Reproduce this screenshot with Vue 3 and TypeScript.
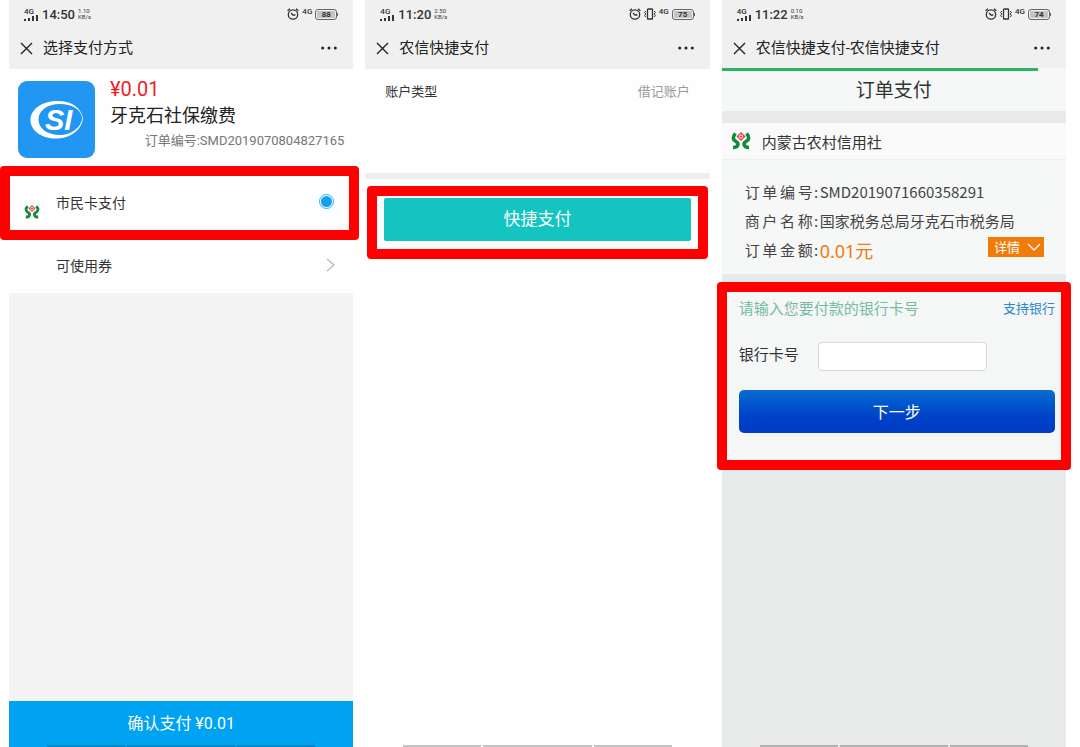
<script setup lang="ts">
import { ref } from 'vue'

interface Screen {
  id: string
  time: string
  speed: string
  battery: string
  vibrate: boolean
  title: string
}

const screens: Screen[] = [
  { id: 'method', time: '14:50', speed: '1.10', battery: '88', vibrate: false, title: '选择支付方式' },
  { id: 'quick', time: '11:20', speed: '2.50', battery: '75', vibrate: true, title: '农信快捷支付' },
  { id: 'order', time: '11:22', speed: '0.10', battery: '74', vibrate: true, title: '农信快捷支付-农信快捷支付' },
]

const orderRows = [
  { label: '订单编号', value: 'SMD2019071660358291' },
  { label: '商户名称', value: '国家税务总局牙克石市税务局' },
]

const method = ref('citizen')
const cardNumber = ref('')
</script>

<template>
  <main class="board">
    <section v-for="s in screens" :key="s.id" class="phone" :class="s.id">
      <header class="top">
        <div class="status">
          <span class="network">
            <span class="net">4G</span>
            <svg class="bars" viewBox="0 0 14 6" aria-hidden="true">
              <path d="M0 4h2v2H0zM4 3h2v3H4zM8 1h2v5H8zM12 0h2v6h-2z" fill="#333" />
            </svg>
          </span>
          <span class="time">{{ s.time }}</span>
          <span class="speed"><span>{{ s.speed }}</span><span>KB/s</span></span>
          <span class="spacer"></span>
          <svg class="alarm" viewBox="0 0 12 12" fill="none" stroke="#333" aria-hidden="true">
            <circle cx="6" cy="6.5" r="4.7" stroke-width="1.3" />
            <path d="M4 5l2 2h2.400M.6 2.800L3 .8M11.400 2.800L9 .8" stroke-width="1.300" />
          </svg>
          <svg v-if="s.vibrate" class="vibrate" viewBox="0 0 12 12" fill="none" stroke="#333" aria-hidden="true">
            <rect x="3.500" y="1" width="5" height="10" rx=".6" stroke-width="1.300" />
            <path d="M1.800 3L.6 4.500l1.200 1.500L.6 7.500 1.800 9M10.200 3l1.200 1.500L10.200 6l1.200 1.500L10.200 9" />
          </svg>
          <span class="data">4G</span>
          <span class="battery"><span class="cell">{{ s.battery }}</span></span>
        </div>
        <div class="titlebar">
          <button class="icon" type="button" aria-label="关闭">
            <svg class="close" viewBox="0 0 13 13" aria-hidden="true">
              <path d="M1 1l11 11M12 1L1 12" fill="none" stroke="#222" stroke-width="1.400" />
            </svg>
          </button>
          <h1>{{ s.title }}</h1>
          <button class="icon" type="button" aria-label="更多">
            <svg class="more" viewBox="0 0 16 4" fill="#222" aria-hidden="true">
              <circle cx="1.700" cy="2" r="1.500" /><circle cx="8" cy="2" r="1.500" /><circle cx="14.300" cy="2" r="1.500" />
            </svg>
          </button>
        </div>
      </header>

      <template v-if="s.id === 'method'">
        <div class="merchant">
          <svg class="app" viewBox="0 0 77 77" role="img" aria-label="社保">
            <rect width="77" height="77" rx="9" fill="#2196f3" />
            <path fill="#fff" fill-rule="evenodd" d="M65 37C63 27 54 20 40 20C24 20 12.500 28 12.500 39C12.500 50 24 57.500 38 57.500C52 57.500 64 49 65 37ZM64.300 37C63 47 53 54 42 54C29 54 20.500 47.500 20.500 38.500C20.500 29.500 29 23 42 23C54 23 62.500 28 64.300 37Z" />
            <text x="27" y="49" class="si">SI</text>
          </svg>
          <div class="info">
            <p class="price">¥0.01</p>
            <p class="name">牙克石社保缴费</p>
            <p class="number">订单编号:SMD2019070804827165</p>
          </div>
        </div>
        <div class="mark pay-mark">
          <label class="option">
            <svg class="bank" viewBox="0 0 20 18" aria-hidden="true">
              <g fill="none" stroke="#108a3c" stroke-width="3.600">
                <path d="M4.500 1.500C1 5 2 8 5 9.500C8.500 11.500 7 15.500 2 15.500" />
                <path d="M15.500 1.500C19 5 18 8 15 9.500C11.500 11.500 13 15.500 18 15.500" />
              </g>
              <path d="M10 0l4.500 4.500L10 9 5.500 4.500z" fill="#e0403c" /><circle cx="10" cy="4.500" r="1.700" fill="none" stroke="#fff" />
            </svg>
            <span class="option-name">市民卡支付</span>
            <input v-model="method" type="radio" name="method" value="citizen" />
          </label>
        </div>
        <button class="coupon" type="button">
          <span>可使用券</span>
          <svg class="chevron" viewBox="0 0 9 14" aria-hidden="true">
            <path d="M1 1l7 6-7 6" fill="none" stroke="#bbb" stroke-width="1.300" />
          </svg>
        </button>
        <div class="rest"></div>
        <button class="confirm" type="button">确认支付 ¥0.01</button>
      </template>

      <template v-else-if="s.id === 'quick'">
        <div class="account"><span>账户类型</span><span class="muted">借记账户</span></div>
        <div class="mark quick-mark">
          <button class="quick-pay" type="button">快捷支付</button>
        </div>
      </template>

      <template v-else>
        <div class="progress"><div class="done"></div></div>
        <h2>订单支付</h2>
        <div class="institution">
          <svg class="bank large" viewBox="0 0 20 18" aria-hidden="true">
            <g fill="none" stroke="#108a3c" stroke-width="3.600">
              <path d="M4.500 1.500C1 5 2 8 5 9.500C8.500 11.500 7 15.500 2 15.500" />
              <path d="M15.500 1.500C19 5 18 8 15 9.500C11.500 11.500 13 15.500 18 15.500" />
            </g>
            <path d="M10 0l4.500 4.500L10 9 5.500 4.500z" fill="#e0403c" /><circle cx="10" cy="4.500" r="1.700" fill="none" stroke="#fff" />
          </svg>
          <span>内蒙古农村信用社</span>
        </div>
        <div class="details">
          <div v-for="row in orderRows" :key="row.label" class="row">
            <span class="key">{{ row.label }}</span><span>:</span><span>{{ row.value }}</span>
          </div>
          <div class="row">
            <span class="key">订单金额</span><span>:</span><span class="amount">0.01元</span>
            <button class="expand" type="button">
              详情
              <svg class="down" viewBox="0 0 14 8" aria-hidden="true">
                <path d="M1 1l6 6 6-6" fill="none" stroke="#fff" stroke-width="1.300" />
              </svg>
            </button>
          </div>
        </div>
        <form class="mark card-form" @submit.prevent>
          <div class="hint"><span>请输入您要付款的银行卡号</span><a href="#banks">支持银行</a></div>
          <div class="field">
            <label for="card">银行卡号</label>
            <input id="card" v-model="cardNumber" type="text" inputmode="numeric" />
          </div>
          <button class="next" type="submit">下一步</button>
        </form>
      </template>

      <div class="nav" aria-hidden="true"><i></i><i></i><i></i></div>
    </section>
  </main>
</template>

<style>
body {
  margin: 0;
  background: #fff;
}
</style>

<style scoped>
.board {
  display: grid;
  grid-template-columns: repeat(3, minmax(0, 1fr));
  gap: 12px;
  min-height: 100vh;
  padding: 0 14px 0 9px;
  box-sizing: border-box;
  background: #fff;
  color: #333;
  font-family: Roboto, "Noto Sans CJK SC", sans-serif;
  font-size: 15px;
}
.board *,
.board *::before {
  box-sizing: border-box;
}
.phone {
  position: relative;
  display: flex;
  flex-direction: column;
  background: #fefefe;
}
.phone.order {
  background: #e7eae9;
  font-family: "Noto Sans CJK SC", sans-serif;
}
p,
h1,
h2 {
  margin: 0;
  font-weight: 400;
}
button {
  padding: 0;
  border: 0;
  background: none;
  color: inherit;
  font: inherit;
}
svg {
  display: block;
  flex: none;
}

.top {
  height: 69px;
  background: #f0f0f0;
  font-family: Roboto, "Noto Sans CJK SC", sans-serif;
}
.order .top {
  height: 68px;
}
.status {
  display: flex;
  align-items: center;
  height: 28px;
  padding: 0 15px;
}
.network {
  width: 14px;
  margin-right: 4px;
}
.net {
  display: block;
  font-size: 8px;
  font-weight: 500;
  line-height: 7px;
}
.bars {
  width: 14px;
  height: 6px;
}
.time {
  font-size: 13px;
  font-weight: 500;
  margin-right: 3px;
}
.speed {
  display: flex;
  flex-direction: column;
  font-size: 6px;
  font-weight: 400;
  line-height: 6px;
}
.spacer {
  flex: 1;
}
.alarm,
.vibrate {
  width: 12px;
  height: 12px;
  margin-right: 3px;
}
.data {
  margin: 0 3px 5px 0;
  font-size: 8px;
  font-weight: 500;
  line-height: 7px;
}
.battery {
  position: relative;
  width: 22px;
  height: 11px;
  margin-right: 1px;
  padding: 1px;
  border: 1px solid #666;
  border-radius: 3px;
}
.battery::before {
  content: "";
  position: absolute;
  top: 3px;
  right: -2px;
  width: 1px;
  height: 3px;
  background: #666;
}
.cell {
  display: block;
  border-radius: 1px;
  background: #c4c4c4;
  font-size: 8px;
  font-weight: 700;
  line-height: 7px;
  text-align: center;
}
.titlebar {
  display: flex;
  align-items: center;
  height: 40px;
  padding: 0 16px 0 11px;
}
.close {
  width: 13px;
  height: 13px;
}
.more {
  width: 16px;
  height: 4px;
}
h1 {
  flex: 1;
  margin-left: 10px;
  color: #222;
  font-size: 15px;
  line-height: 20px;
  white-space: nowrap;
}

.mark {
  border: 10px solid #f00;
  border-radius: 4px;
}

.merchant {
  display: flex;
  gap: 15px;
  padding: 12px 9px 8px;
}
.app {
  width: 77px;
  height: 77px;
}
.si {
  fill: #fff;
  font: italic 700 29px "Liberation Sans", sans-serif;
}
.info {
  flex: 1;
  white-space: nowrap;
}
.price {
  margin-top: -4px;
  color: #f21c26;
  font-size: 20px;
  line-height: 24px;
}
.name {
  color: #222;
  font-size: 18px;
  line-height: 30px;
}
.number {
  color: #777;
  font-size: 13px;
  line-height: 20px;
  text-align: right;
}
.pay-mark {
  margin: 0 -6px 0 -9px;
}
.option {
  display: flex;
  align-items: center;
  height: 54px;
  padding: 0 15px 0 14px;
  font-size: 14px;
}
.bank {
  width: 16px;
  height: 14px;
  margin: 18px 16px 0 0;
}
.option-name {
  flex: 1;
  margin-bottom: 2px;
}
.option input {
  width: 15px;
  height: 15px;
  margin: 0 0 4px;
  appearance: none;
  border: 1px solid #30aef0;
  border-radius: 50%;
  background: #10a0ee content-box;
  padding: 1px;
}
.coupon {
  display: flex;
  align-items: center;
  justify-content: space-between;
  height: 53px;
  padding: 0 18px 4px 47px;
  font-size: 14px;
}
.chevron {
  width: 9px;
  height: 14px;
}
.rest {
  flex: 1;
  background: #f4f4f4;
}
.confirm {
  height: 46px;
  padding-bottom: 4px;
  background: #00a2f2;
  color: #fff;
  font-size: 16px;
}

.account {
  display: flex;
  justify-content: space-between;
  height: 110px;
  padding: 13px 20px 0;
  border-bottom: 6px solid #eee;
  font-size: 13px;
  line-height: 20px;
}
.muted {
  color: #999;
}
.quick-mark {
  margin: 7px 2px 0;
  padding: 2px 7px 8px;
}
.quick-pay {
  display: block;
  width: 100%;
  height: 43px;
  padding-bottom: 4px;
  border-radius: 2px;
  background: #13c4c0;
  color: #fff;
  font-size: 17px;
}

.progress {
  height: 3px;
  background: #f5f8f7;
}
.done {
  width: 92%;
  height: 3px;
  background: #2bb267;
}
h2 {
  height: 40px;
  background: #f5f8f7;
  font-size: 19px;
  line-height: 36px;
  text-align: center;
}
.institution {
  display: flex;
  align-items: center;
  gap: 11px;
  height: 37px;
  margin-top: 12px;
  padding: 0 9px;
  border-bottom: 1px solid #eee;
  background: #f9faf9;
}
.bank.large {
  width: 20px;
  height: 18px;
  margin: 0;
}
.details {
  height: 114px;
  padding: 17px 22px 0 23px;
  background: #f6f7f7;
  color: #444;
}
.row {
  display: flex;
  align-items: center;
  height: 29px;
  white-space: nowrap;
}
.key {
  width: 68px;
  text-align: justify;
  text-align-last: justify;
}
.key + span {
  width: 7px;
  text-align: center;
}
.amount {
  color: #ee7c0c;
  font-family: "Noto Sans", "Noto Sans CJK SC", sans-serif;
  font-size: 18px;
}
.expand {
  display: flex;
  align-items: center;
  justify-content: space-between;
  width: 56px;
  height: 20px;
  margin: 0 0 6px auto;
  padding: 0 3px 0 6px;
  background: #f27a08;
  color: #fff;
  font-size: 13px;
  line-height: 20px;
}
.down {
  width: 14px;
  height: 8px;
}
.card-form {
  margin: 8px -5px 0;
  padding: 5px 6px 27px 12px;
  background: #f5f6f6;
}
.hint {
  display: flex;
  align-items: center;
  justify-content: space-between;
  height: 20px;
  color: #74bca4;
}
.hint a {
  color: #2a88d0;
  font-size: 13px;
  text-decoration: none;
}
.field {
  display: flex;
  align-items: center;
  gap: 19px;
  margin: 25px 0 19px;
}
.field label {
  margin-bottom: 6px;
}
.field input {
  width: 169px;
  height: 29px;
  padding: 0 8px;
  border: 1px solid #d8d8d8;
  border-radius: 4px;
  background: #fff;
  font: inherit;
}
.next {
  display: block;
  width: 100%;
  height: 43px;
  padding-bottom: 2px;
  border-radius: 5px;
  background: linear-gradient(#0a6cd2, #0058cc 30%, #0040c8 65%, #003cc4);
  color: #fff;
  font-size: 16px;
}

.nav {
  position: absolute;
  right: 11%;
  bottom: 0;
  left: 11%;
  display: grid;
  grid-template-columns: 78fr 108fr 78fr;
  gap: 2px;
}
.nav i {
  height: 2px;
  background: #c4c4c4;
}
.method .nav i {
  background: #0585c6;
}
.order .nav i {
  background: #b2b2b2;
}
</style>
